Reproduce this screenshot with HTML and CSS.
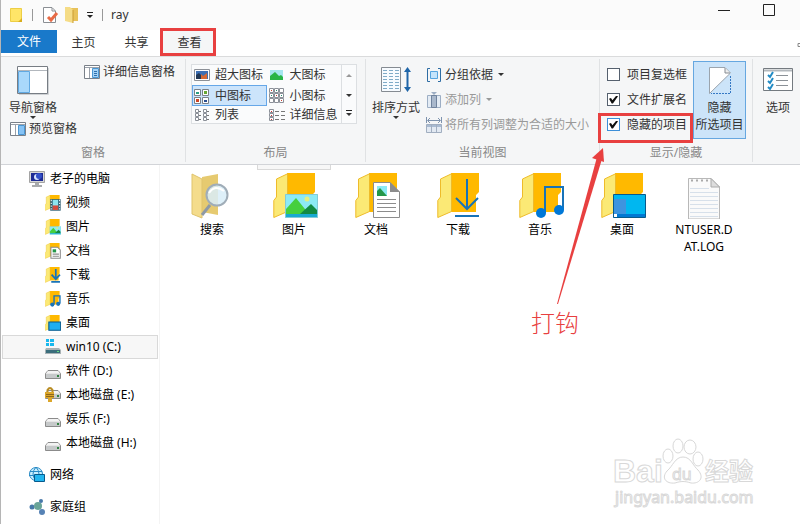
FILE: index.html
```html
<!DOCTYPE html>
<html lang="zh-CN">
<head>
  <meta charset="UTF-8" />
  <meta name="viewport" content="width=device-width, initial-scale=1.0" />
  <title>ray</title>
  <link rel="stylesheet" href="styles.css">
</head>
<body>
  <!-- shared icon shapes -->
  <svg class="defs" width="0" height="0" aria-hidden="true">
    <defs>
      <symbol id="folder" viewBox="0 0 46 46">
        <path d="M14 0H42V19L39 22V39H14Z" fill="#ffb900" />
        <path d="M14.500 .8V38.500L.8 44.500V27.500L3.500 24V6Z" fill="#fbe975" stroke="#eebb2a" />
      </symbol>
      <symbol id="picture" viewBox="0 0 33 24">
        <path d="M0 0H33V24H0Z" fill="#8ceaf5" />
        <circle cx="22" cy="5" r="2.500" fill="#e3f082" />
        <path d="M1 20V15L11 4L24 20Z" fill="#45cf3e" />
        <path d="M15 20L26 10L32 16V20Z" fill="#128a43" />
        <path d="M1 20H32V23H1Z" fill="#18a9d1" />
        <path d="M.5 .5H32.500V23.500H.5Z" fill="none" stroke="#83cbd6" />
      </symbol>
      <symbol id="page" viewBox="0 0 27 36">
        <path d="M.5 .5H17L26.500 10V35.500H.5Z" fill="#fff" stroke="#8c8c8c" />
        <path d="M17 0V10H27Z" fill="#8c8c8c" />
        <path d="M4 4H14V14H4Z" fill="#8ceaf5" />
        <path d="M4 14V9L7 6L14 14Z" fill="#24974a" />
        <path d="M4 17.500H23M4 21.500H23M4 25.500H23M4 29.500H23" stroke="#8c8c8c" />
      </symbol>
      <symbol id="desk" viewBox="0 0 33 24">
        <path d="M.5 .5H32.500V23.500H.5Z" fill="#00b7f0" stroke="#075a8c" />
        <path d="M1 5H13V20H1Z" fill="#3e94df" />
        <path d="M1 20H32V23H1Z" fill="#0078d2" />
        <path d="M1 20H4V23H1Z" fill="#fff" />
      </symbol>
      <symbol id="drive" viewBox="0 0 16 16">
        <path d="M3 5.500H13L15.500 8.500V13.500H.5V8.500Z" fill="#d9d9d9" stroke="#8b8b8b" />
        <path d="M3 6H13L15 8.500H1Z" fill="#f3f3f3" />
        <path d="M1 9H15V13H1Z" fill="#c6c9ca" />
        <path d="M12 10H14V12H12Z" fill="#328342" />
      </symbol>
      <symbol id="window" viewBox="0 0 16 16">
        <path d="M.5 1.500H15.500V14.500H.5Z" fill="#fff" stroke="#798089" />
        <path d="M1 3.500H15M5.500 4V14" stroke="#9aa1aa" />
      </symbol>
    </defs>
  </svg>

  <div class="window">
    <header class="titlebar">
      <svg width="15" height="16" viewBox="0 0 15 16"><path d="M1.500 1.500H12.500V14.500H1.500Z" fill="#ffe568" stroke="#edce45" /><path d="M9 15L13 11V15Z" fill="#d9ad1c" /></svg>
      <span class="divider"></span>
      <svg class="gap-left" width="16" height="16" viewBox="0 0 16 16"><path d="M.5 .5H9L12.500 4V15.500H.5Z" fill="#fff" stroke="#8b8f94" /><path d="M9 1V4H12" fill="none" stroke="#8b8f94" /><path d="M5 10L8 13L14 6" fill="none" stroke="#e86a45" stroke-width="3" /></svg>
      <svg class="gap-small" width="15" height="16" viewBox="0 0 15 16"><path d="M5 1H13V14H5Z" fill="#e8c25a" /><path d="M0 0H5L8 3V16L0 14Z" fill="#f5dc86" /><path d="M8 3V16" stroke="#c99b30" /></svg>
      <svg class="gap-small" width="8" height="8" viewBox="0 0 8 8"><path d="M1 1.500H7" stroke="#222" /><path d="M1 4H7L4 7Z" fill="#222" /></svg>
      <span class="divider"></span>
      <span class="title">ray</span>
      <div class="controls">
        <button aria-label="最小化"><svg width="14" height="14" viewBox="0 0 14 14"><path d="M1 7.500H13" stroke="#222" /></svg></button>
        <button aria-label="最大化"><svg width="14" height="14" viewBox="0 0 14 14"><path d="M1.500 1.500H12.500V12.500H1.500Z" fill="none" stroke="#222" /></svg></button>
      </div>
    </header>

    <nav class="tabs">
      <button class="file">文件</button>
      <button>主页</button>
      <button>共享</button>
      <button class="active">查看</button>
      <button class="collapse" aria-label="折叠功能区"><svg width="3" height="4" viewBox="0 0 3 4"><path d="M3 .5H1V3.500H3" fill="none" stroke="#888" /></svg></button>
    </nav>

    <section class="ribbon">
      <div class="group panes">
        <div class="group-body">
          <div class="pane-column">
            <button class="big">
              <svg width="32" height="30" viewBox="0 0 32 30"><path d="M.5 1.500H30.500V28.500H.5Z" fill="#fff" stroke="#777d84" /><path d="M1 5.500H30" stroke="#b2b7bd" /><path d="M1.500 6.500H12.500V27.500H1.500Z" fill="#a9d8fb" stroke="#61a9e2" /><path d="M31.500 3V29.500H2" fill="none" stroke="#cfd2d5" /></svg>
              <span>导航窗格</span>
              <i class="caret"></i>
            </button>
            <button class="small">
              <svg width="16" height="16"><use href="#window" /><path d="M8.500 4.500H14.500V13.500H8.500Z" fill="#86c3f5" stroke="#4b97d3" /></svg>
              预览窗格
            </button>
          </div>
          <button class="small">
            <svg width="16" height="16"><use href="#window" /><path d="M8.500 4.500H14.500V13.500H8.500Z" fill="#a7d3f6" stroke="#4b97d3" /><path d="M10 7.500H13M10 9.500H13M10 11.500H13" stroke="#2c70ae" /></svg>
            详细信息窗格
          </button>
        </div>
        <div class="group-name">窗格</div>
      </div>

      <div class="group layout">
        <div class="group-body">
          <div class="gallery">
            <div class="views">
              <button><svg width="16" height="16" viewBox="0 0 16 16"><path d="M.5 2.500H15.500V13.500H.5Z" fill="#fff" stroke="#8c9097" /><path d="M2 4H14V12H2Z" fill="#3d70b5" /><path d="M2 12V8L5 6L8 9V12Z" fill="#223754" /><path d="M7 12V7L9 9L13 6V12Z" fill="#d66a34" /></svg>超大图标</button>
              <button><svg width="16" height="16" viewBox="0 0 16 16"><path d="M1 3H14V13H1Z" fill="#a5e5ee" /><path d="M1 13V9L6 5L10 9L12 8L14 10V13Z" fill="#28b546" /></svg>大图标</button>
              <button class="selected"><svg width="16" height="16" viewBox="0 0 16 16"><path d="M.5 1.500H6.500V7.500H.5ZM8.500 1.500H14.500V7.500H8.500ZM.5 9.500H6.500V15.500H.5ZM8.500 9.500H14.500V15.500H8.500Z" fill="#fff" stroke="#7b8088" /><path d="M2 4H5V6H2Z" fill="#299e83" /><path d="M10 3H13V6H10Z" fill="#66a732" /><path d="M2 11H5V14H2Z" fill="#ce4524" /><path d="M10 12H13V14H10Z" fill="#294e91" /></svg>中图标</button>
              <button><svg width="16" height="16" viewBox="0 0 16 16"><path d="M.5 .5H4.500V4.500H.5ZM5.500 .5H9.500V4.500H5.500ZM10.500 .5H14.500V4.500H10.500ZM.5 5.500H4.500V9.500H.5ZM5.500 5.500H9.500V9.500H5.500ZM10.500 5.500H14.500V9.500H10.500ZM.5 10.500H4.500V14.500H.5ZM5.500 10.500H9.500V14.500H5.500ZM10.500 10.500H14.500V14.500H10.500Z" fill="#fff" stroke="#8b9098" /><path d="M2 2H3V3H2ZM7 7H8V8H7ZM12 12H13V13H12Z" fill="#c74031" /><path d="M7 2H8V3H7ZM2 7H3V8H2ZM12 7H13V8H12Z" fill="#238e70" /></svg>小图标</button>
              <button><svg width="16" height="16" viewBox="0 0 16 16"><path d="M1.500 2.500H4.500V5.500H1.500ZM1.500 6.500H4.500V9.500H1.500ZM1.500 10.500H4.500V13.500H1.500ZM9.500 2.500H12.500V5.500H9.500ZM9.500 6.500H12.500V9.500H9.500ZM9.500 10.500H12.500V13.500H9.500Z" fill="#fff" stroke="#8b9098" /><path d="M5 4.500H7M5 8.500H7M5 12.500H7M13 4.500H15M13 8.500H15M13 12.500H15" stroke="#777" /></svg>列表</button>
              <button><svg width="16" height="16" viewBox="0 0 16 16"><path d="M.5 2.500H4.500V5.500H.5ZM.5 6.500H4.500V9.500H.5ZM.5 10.500H4.500V13.500H.5Z" fill="#fff" stroke="#8b9098" /><path d="M6 4.500H10M12 4.500H16M6 8.500H10M12 8.500H16M6 12.500H10M12 12.500H16" stroke="#777" /><path d="M2 4H3V5H2ZM2 8H3V9H2ZM2 12H3V13H2Z" fill="#c33" /></svg>详细信息</button>
            </div>
            <div class="scroller">
              <button aria-label="向上"><i class="caret up"></i></button>
              <button aria-label="向下"><i class="caret"></i></button>
              <button aria-label="更多"><i class="caret more"></i></button>
            </div>
          </div>
        </div>
        <div class="group-name">布局</div>
      </div>

      <div class="group current">
        <div class="group-body">
          <button class="big">
            <svg width="32" height="30" viewBox="0 0 32 30"><path d="M1.500 2.500H20.500V26.500H1.500Z" fill="#f7fbff" stroke="#858b92" /><path d="M3 5.500H19M3 8.500H19M3 11.500H19M3 14.500H19M3 17.500H19M3 20.500H19M3 23.500H19" stroke="#7fabc8" stroke-dasharray="4 2" /><path d="M27.500 5V24" stroke="#1f65a8" stroke-width="2" /><path d="M24 7L27.500 2L31 7ZM24 22L27.500 27L31 22Z" fill="#1f65a8" /></svg>
            <span>排序方式</span>
            <i class="caret"></i>
          </button>
          <div class="rows">
            <button class="small">
              <svg width="16" height="16" viewBox="0 0 16 16"><path d="M4 1.500H1.500V14.500H4M12 1.500H14.500V14.500H12" fill="none" stroke="#2e6da4" /><path d="M4.500 4.500H11.500V11.500H4.500Z" fill="#c5e4fb" stroke="#56a4df" /></svg>
              分组依据 <i class="caret"></i>
            </button>
            <button class="small" disabled>
              <svg width="16" height="16" viewBox="0 0 16 16"><path d="M1.500 3.500H14.500V15.500H1.500Z" fill="#e3ebf4" stroke="#9daec4" /><path d="M5.500 3.500H10.500V15.500H5.500Z" fill="#a9b8cc" stroke="#70839d" /><path d="M5 0H11L8 3Z" fill="#9daec4" /></svg>
              添加列 <i class="caret"></i>
            </button>
            <button class="small" disabled>
              <svg width="16" height="16" viewBox="0 0 16 16"><path d="M.5 0V6M15.500 0V6M2 3.500H14M4 1L1.500 3.500L4 6M12 1L14.500 3.500L12 6" fill="none" stroke="#7e93ae" /><path d="M.5 7.500H15.500V15.500H.5Z" fill="#e2e9f2" stroke="#a1aec0" /><path d="M1 8H15V10H1Z" fill="#a9bbd2" /><path d="M5.500 8V15M10.500 8V15" stroke="#a1aec0" /></svg>
              将所有列调整为合适的大小
            </button>
          </div>
        </div>
        <div class="group-name">当前视图</div>
      </div>

      <div class="group visibility">
        <div class="group-body">
          <div class="rows">
            <label><input type="checkbox"> 项目复选框</label>
            <label><input type="checkbox" checked> 文件扩展名</label>
            <label class="marked"><input type="checkbox" checked> 隐藏的项目</label>
          </div>
          <button class="big pressed">
            <svg width="24" height="30" viewBox="0 0 24 30"><path d="M1.500 2.500H17L22.500 8L1.500 28.500Z" fill="#fff" stroke="#9ba4ad" /><path d="M17 3V8H22" fill="#eee" stroke="#858b92" /><path d="M22.500 11V28.500H3" fill="none" stroke="#3578c4" stroke-dasharray="2 1" /></svg>
            <span>隐藏<br>所选项目</span>
          </button>
        </div>
        <div class="group-name">显示/隐藏</div>
      </div>

      <div class="group options">
        <div class="group-body">
          <button class="big">
            <svg width="32" height="30" viewBox="0 0 32 30"><path d="M1.500 3.500H30.500V25.500H1.500Z" fill="#fff" stroke="#747a80" /><path d="M2 5.500H30" stroke="#b3b8bd" stroke-width="2" /><path d="M6 10L8 12L11 7M6 16L8 18L11 13M6 22L8 24L11 19" fill="none" stroke="#218bc5" stroke-width="2" /><path d="M14 10.500H26M14 15.500H26M14 20.500H26" stroke="#8b9197" /></svg>
            <span>选项</span>
          </button>
        </div>
      </div>
    </section>

    <div class="content">
      <aside class="tree">
        <a href="#" class="root"><svg width="16" height="16" viewBox="0 0 16 16"><path d="M.5 .5H15.500V11.500H.5Z" fill="#d8d8d8" stroke="#a3a3a3" /><path d="M2 2H14V10H2Z" fill="#1d2b94" /><circle cx="8" cy="6" r="3" fill="#d8e4ff" /><circle cx="10" cy="5" r="3" fill="#3350c8" /><path d="M6 12H10V14H13V16H3V14H6Z" fill="#a9abad" /></svg>老子的电脑</a>
        <a href="#"><svg width="16" height="16" viewBox="0 0 46 46"><use href="#folder" /><path d="M15 12H45V45H15Z" fill="#24576d" /><path d="M22 14H38V43H22Z" fill="#8de5ef" /><path d="M22 30H38V43H22Z" fill="#d34b3d" /><path d="M18 14V44M42 14V44" stroke="#fff" stroke-width="3" stroke-dasharray="4 4" /></svg>视频</a>
        <a href="#"><svg width="16" height="16" viewBox="0 0 46 46"><use href="#folder" /><use href="#picture" x="13" y="21" width="33" height="24" /></svg>图片</a>
        <a href="#"><svg width="16" height="16" viewBox="0 0 46 46"><use href="#folder" /><path d="M17 12H36L44 20V44H17Z" fill="#fff" stroke="#8c8c8c" stroke-width="3" /><path d="M22 18H32V27H22Z" fill="#24974a" /><path d="M22 32H40M22 38H40" stroke="#8c8c8c" stroke-width="3" /></svg>文档</a>
        <a href="#"><svg width="16" height="16" viewBox="0 0 46 46"><use href="#folder" /><path d="M31 6V33M19 22L31 35L43 22M18 43H43" fill="none" stroke="#1873b8" stroke-width="5" /></svg>下载</a>
        <a href="#"><svg width="16" height="16" viewBox="0 0 46 46"><use href="#folder" /><path d="M26 39V14H43V36" fill="none" stroke="#1873b8" stroke-width="4" /><circle cx="21" cy="39" r="6" fill="#1873b8" /><circle cx="38" cy="37" r="6" fill="#1873b8" /></svg>音乐</a>
        <a href="#"><svg width="16" height="16" viewBox="0 0 46 46"><use href="#folder" /><path d="M11 20H45V44H11Z" fill="#20aef1" stroke="#075a8c" stroke-width="3" /></svg>桌面</a>
        <a href="#" class="current-drive"><svg width="16" height="16" viewBox="0 0 16 16"><path d="M1 0H4V3H1ZM5 0H9V3H5ZM1 4H4V7H1ZM5 4H9V7H5Z" fill="#18b8ee" /><path d="M1 9H14L16 11V15H0V11Z" fill="#a8b2b5" /><path d="M1 11H15V14H1Z" fill="#3b6e7c" /><path d="M12 12H14V13H12Z" fill="#68df82" /></svg>win10 (C:)</a>
        <a href="#"><svg width="16" height="16"><use href="#drive" y="2" /></svg>软件 (D:)</a>
        <a href="#"><svg width="16" height="16" viewBox="0 0 16 16"><use href="#drive" y="-2" width="16" height="16" /><path d="M2.500 6V3Q5 -1 7.500 3V6" fill="none" stroke="#b98d24" stroke-width="2" /><path d="M0 5H9V11H7V15H3V11H0Z" fill="#dca62a" /><path d="M1 7.500H9M1 9.500H9" stroke="#8e681b" /></svg>本地磁盘 (E:)</a>
        <a href="#"><svg width="16" height="16"><use href="#drive" y="2" /></svg>娱乐 (F:)</a>
        <a href="#"><svg width="16" height="16"><use href="#drive" y="2" /></svg>本地磁盘 (H:)</a>
        <a href="#" class="root spaced"><svg width="16" height="16" viewBox="0 0 16 16"><circle cx="7" cy="7" r="6.500" fill="#c9efff" stroke="#2889c4" /><path d="M7 0Q1 7 7 14M7 0Q13 7 7 14M1 4.500H13M0 8.500H8" fill="none" stroke="#2889c4" /><path d="M5.500 7.500H15.500V14.500H5.500Z" fill="#22b5ef" stroke="#075a8c" /></svg>网络</a>
        <a href="#" class="root spaced"><svg width="16" height="16" viewBox="0 0 16 16"><circle cx="3" cy="8" r="2.500" fill="#4778a9" /><circle cx="9" cy="7" r="4" fill="#69a498" /><circle cx="12" cy="2" r="2" fill="#4778a9" /><circle cx="13" cy="13" r="3" fill="#5682b5" /></svg>家庭组</a>
      </aside>

      <main class="files">
        <div class="cut-item"></div>
        <a href="#" class="item">
          <svg width="46" height="46" viewBox="0 0 46 46"><path d="M11 4L27 1V42L11 39Z" fill="#e6ca70" /><path d="M1 1L11 6V45L1 41Z" fill="#f4dc8c" stroke="#dfc36c" /><path d="M19 32L11 42" stroke="#8e99a5" stroke-width="3" /><circle cx="26" cy="22" r="10.500" fill="#d8edf8" fill-opacity=".85" stroke="#a0adb8" stroke-width="2" /><path d="M18 20Q24 11 33 18" fill="none" stroke="#fff" stroke-width="2" /></svg>
          <span>搜索</span>
        </a>
        <a href="#" class="item">
          <svg width="46" height="46"><use href="#folder" width="46" height="46" /><use href="#picture" x="12" y="21" width="33" height="24" /></svg>
          <span>图片</span>
        </a>
        <a href="#" class="item">
          <svg width="46" height="46"><use href="#folder" width="46" height="46" /><use href="#page" x="18" y="9" width="27" height="36" /></svg>
          <span>文档</span>
        </a>
        <a href="#" class="item">
          <svg width="46" height="46"><use href="#folder" width="46" height="46" /><path d="M30 6V36M19 25L30 36L41 25M18 43H42" fill="none" stroke="#1873b8" stroke-width="2" /></svg>
          <span>下载</span>
        </a>
        <a href="#" class="item">
          <svg width="46" height="46"><use href="#folder" width="46" height="46" /><path d="M26 40V14H44V37" fill="none" stroke="#1873b8" stroke-width="2" /><circle cx="22" cy="40" r="5" fill="#0078d7" /><circle cx="40" cy="37" r="5" fill="#0078d7" /></svg>
          <span>音乐</span>
        </a>
        <a href="#" class="item">
          <svg width="46" height="46"><use href="#folder" width="46" height="46" /><use href="#desk" x="12" y="21" width="33" height="24" /></svg>
          <span>桌面</span>
        </a>
        <a href="#" class="item">
          <svg width="46" height="46" viewBox="2 0 46 46"><path d="M7.500 5.500H30L38.500 14V46H7.500Z" fill="#fafafa" stroke="#b8b8b8" /><path d="M30 5.500L38.500 14H30Z" fill="#ddd" stroke="#aaa" /><path d="M9 15.500H28M9 19.500H37M9 23.500H37M9 27.500H37M9 31.500H37M9 35.500H37M9 39.500H37M9 43.500H37" stroke="#d7e0ea" /><path d="M10 7.500H28" stroke="#aaa" stroke-width="2" stroke-dasharray="2 3" /></svg>
          <span>NTUSER.D<br>AT.LOG</span>
        </a>
      </main>
    </div>

    <!-- annotation arrow, lies over the ribbon and the files -->
    <div class="callout">
      <svg width="52" height="160" viewBox="0 0 52 160"><path d="M2 156L42 9L47 11L3 156Z" fill="#e84040" /><path d="M48 0L37 10L49 14Z" fill="#e84040" /></svg>
      <span>打钩</span>
    </div>

    <svg class="watermark" width="146" height="80" viewBox="0 0 146 80">
      <g fill="#fff" stroke="#d8d8d8">
        <text x="3" y="45" class="wm-large">Bai</text>
        <ellipse cx="58" cy="19" rx="5" ry="7" />
        <ellipse cx="68" cy="9" rx="5" ry="7" />
        <ellipse cx="80" cy="10" rx="6" ry="7" />
        <ellipse cx="88" cy="22" rx="5" ry="7" />
        <path d="M73 20C81 20 83 29 88 33C95 41 89 47 81 46C75 44 71 44 65 46C56 47 51 41 57 34C63 29 65 20 73 20Z" />
        <text x="62" y="43" class="wm-small">du</text>
        <text x="95" y="43" class="wm-cjk">经验</text>
        <text x="5" y="66" class="wm-small">jingyan.baidu.com</text>
      </g>
    </svg>
  </div>
</body>
</html>
```
FILE: styles.css
```css
* {
  box-sizing: border-box;
}

body {
  margin: 0;
  font-family: "Noto Sans", "Noto Sans CJK SC", sans-serif;
  font-size: 12px;
  line-height: 16px;
  color: #333;
  background-color: #fff;
}

button {
  font: inherit;
  color: inherit;
  background: none;
  border: none;
  padding: 0;
  white-space: nowrap;
}

a {
  color: #000;
  text-decoration: none;
}

svg {
  flex-shrink: 0;
}

.defs {
  position: absolute;
}

.window {
  position: relative;
  display: flex;
  flex-direction: column;
  min-height: 100vh;
  overflow: hidden;
  border-left: 1px solid #b5b5b5;
}

/* title bar */
.titlebar {
  display: flex;
  align-items: center;
  height: 30px;
  padding-left: 8px;
  background-color: #fbfbfb;
}

.divider {
  width: 1px;
  height: 12px;
  margin: 0 8px;
  background-color: #999;
}

.gap-left {
  margin-left: 2px;
}

.gap-small {
  margin-left: 6px;
}

.controls {
  display: flex;
  align-self: flex-start;
  gap: 31px;
  margin-left: auto;
  padding: 3px 24px 0 0;
}

.controls svg {
  display: block;
}

/* tabs */
.tabs {
  display: flex;
  height: 26px;
}

.tabs button {
  width: 53px;
}

.tabs .file {
  width: 56px;
  height: 23px;
  background-color: #1979ca;
  color: #fff;
}

.tabs .active {
  position: relative;
  background-color: #f5f6f7;
}

.tabs .collapse {
  width: 3px;
  margin-left: auto;
}

.tabs .active::after,
.marked::after {
  content: "";
  position: absolute;
  border: 3px solid #e84040;
  pointer-events: none;
}

.tabs .active::after {
  inset: -2px 0 0 -3px;
}

/* ribbon */
.ribbon {
  display: flex;
  height: 109px;
  padding: 2px 0;
  background-color: #f5f6f7;
  border-top: 1px solid #dadbdc;
  border-bottom: 1px solid #d2d4d8;
}

.group {
  display: flex;
  flex-direction: column;
  flex-shrink: 0;
  border-right: 1px solid #e0e2e4;
}

.group-body {
  display: flex;
  flex: 1;
  align-items: flex-start;
}

.group-name {
  height: 17px;
  text-align: center;
  color: #888;
}

.panes {
  width: 185px;
}

.layout {
  width: 180px;
}

.current {
  width: 234px;
}

.visibility {
  width: 153px;
}

.options {
  flex: 1;
  border-right: none;
}

.big {
  display: flex;
  flex-direction: column;
  align-items: center;
  padding-top: 6px;
}

.big span {
  margin-top: 4px;
  line-height: 17px;
}

.small {
  display: flex;
  align-items: center;
  gap: 3px;
  height: 25px;
}

.caret {
  width: 0;
  height: 0;
  border: 3px solid transparent;
  border-top-color: currentColor;
  border-bottom: none;
}

.caret.up {
  border-top: none;
  border-bottom: 3px solid #999;
}

.small .caret {
  margin-left: 2px;
}

.small:disabled {
  color: #999;
}

.panes .group-body {
  gap: 7px;
  padding-left: 8px;
}

.panes .pane-column .small {
  height: 20px;
  padding-left: 1px;
}

.panes .group-body > .small {
  height: 26px;
}

.layout .group-body {
  padding: 5px 8px 0 5px;
}

.gallery {
  display: flex;
  flex: 1;
  height: 60px;
  border: 1px solid #dcdfe2;
  background-color: #fafbfc;
}

.views {
  display: grid;
  grid-template-columns: 1fr 1fr;
  grid-template-rows: 20px 21px 17px;
  flex: 1;
}

.views button {
  display: flex;
  align-items: center;
  gap: 5px;
  padding-left: 2px;
}

.views .selected {
  border: 1px solid #66a7e8;
  padding-left: 1px;
  background-color: #cce4fb;
}

.scroller {
  display: grid;
  grid-template-rows: 20px 21px 17px;
  width: 15px;
  border-left: 1px solid #dcdfe2;
}

.scroller button {
  display: flex;
  align-items: center;
  justify-content: center;
}

.scroller .more {
  position: relative;
}

.scroller .more::before {
  content: "";
  position: absolute;
  top: -6px;
  left: -3px;
  width: 6px;
  height: 1px;
  background-color: #222;
}

.current .group-body {
  gap: 6px;
  padding-left: 6px;
}

.rows {
  padding-top: 3px;
}

.visibility .group-body {
  justify-content: space-between;
  padding: 0 6px 0 7px;
}

.visibility label {
  display: flex;
  align-items: center;
  gap: 7px;
  height: 25px;
}

.visibility input {
  display: grid;
  place-items: center;
  appearance: none;
  width: 13px;
  height: 13px;
  margin: 0;
  border: 1px solid #55606e;
  background-color: #fff;
}

.visibility input:checked::before {
  content: "";
  width: 9px;
  height: 8px;
  background-color: #111;
  clip-path: polygon(0 40%, 22% 32%, 38% 58%, 82% 0, 100% 8%, 44% 100%, 30% 100%);
}

.marked {
  position: relative;
}

.marked input {
  border-color: #3c8ed8;
}

.marked::after {
  inset: 1px -6px -6px -9px;
}

.big.pressed {
  width: 53px;
  height: 78px;
  margin-top: 2px;
  padding-top: 3px;
  border: 1px solid #66a7e0;
  background-color: #cce4f9;
}

.options .group-body {
  padding-left: 9px;
}

/* folder tree and files */
.content {
  display: flex;
  flex: 1;
}

.tree {
  width: 159px;
  padding: 2px 1px 0;
  border-right: 1px solid #f4f4f4;
}

.tree a {
  display: flex;
  align-items: center;
  gap: 5px;
  height: 24px;
  padding-left: 43px;
}

.tree .root {
  padding-left: 27px;
}

.tree .spaced {
  margin-top: 8px;
}

.tree .current-drive {
  border: 1px solid #d9d9d9;
  padding-left: 42px;
  background-color: #f7f7f7;
}

.files {
  position: relative;
  display: flex;
  flex: 1;
  flex-wrap: wrap;
  align-content: flex-start;
  padding: 8px 0 0 11px;
}

.item {
  display: flex;
  flex-direction: column;
  align-items: center;
  width: 82px;
  line-height: 17px;
  text-align: center;
}

.item svg {
  margin-left: 4px;
}

.item span {
  margin-top: 2px;
}

/* bottom edge of a tile scrolled under the ribbon */
.cut-item {
  position: absolute;
  top: 0;
  left: 97px;
  width: 74px;
  height: 5px;
  border: 1px solid #d9d9d9;
  border-top: none;
  background-color: #f7f7f7;
}

/* annotation */
.callout {
  position: absolute;
  top: 148px;
  left: 554px;
  color: #e84040;
}

.callout svg {
  display: block;
}

.callout span {
  display: block;
  margin-left: -24px;
  font-size: 24px;
  font-weight: 300;
  line-height: 30px;
}

.watermark {
  position: absolute;
  right: 44px;
  bottom: 7px;
}

.wm-large {
  font: bold 32px "Liberation Sans", sans-serif;
}

.wm-cjk {
  font: bold 24px "Noto Sans CJK SC", sans-serif;
}

.wm-small {
  font: 16px "Noto Sans", sans-serif;
}
```
